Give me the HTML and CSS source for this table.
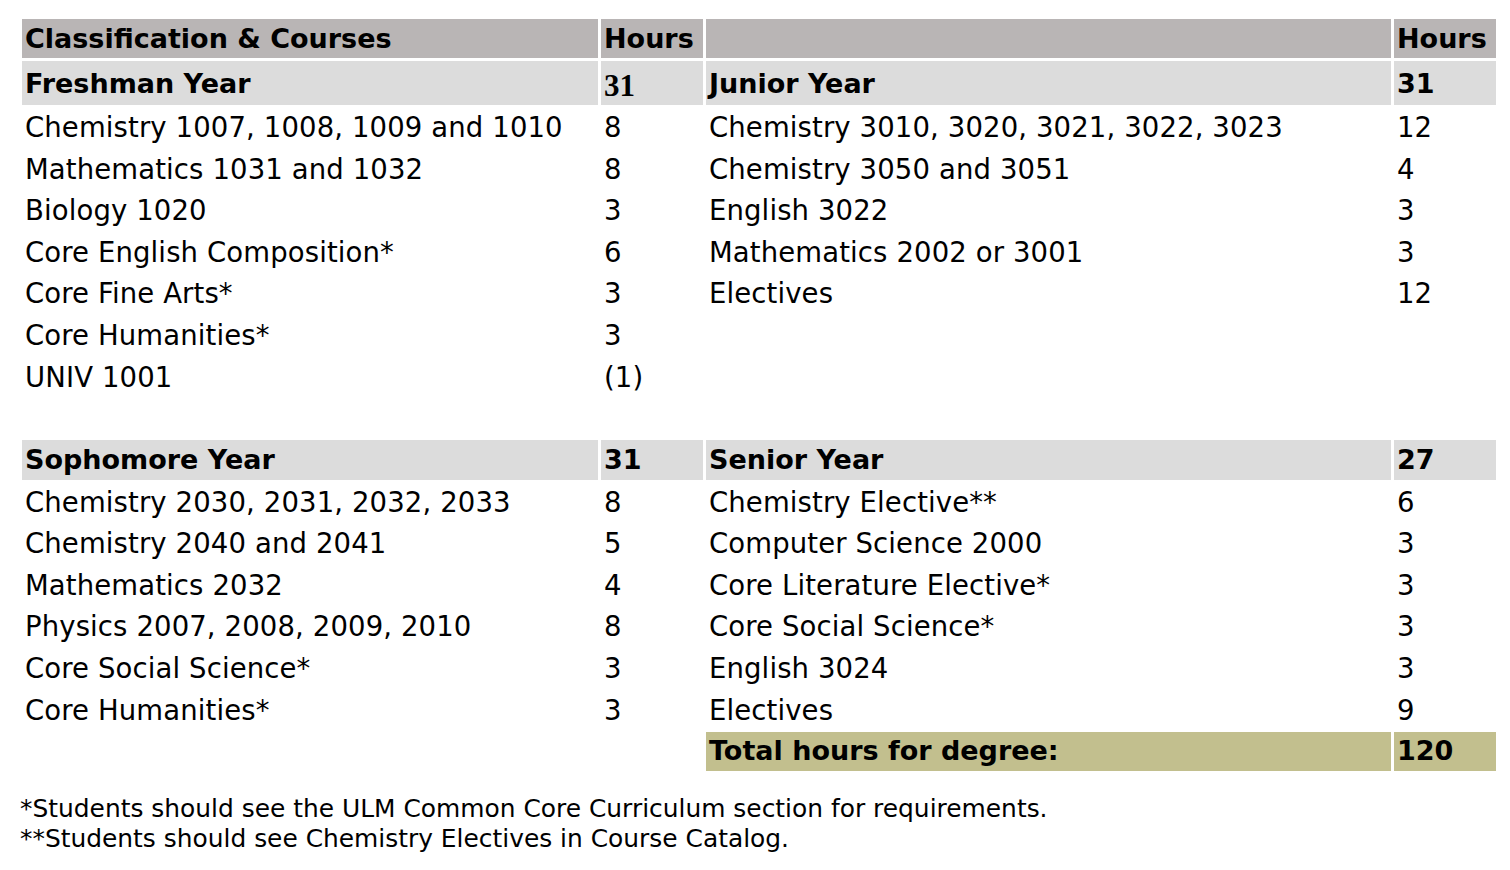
FILE: index.html
```html
<!DOCTYPE html>
<html>
<head>
<meta charset="utf-8">
<link rel="stylesheet" href="styles.css">
</head>
<body>
<table class="plan">
  <colgroup>
    <col class="c-course"><col class="c-hours"><col class="c-course2"><col class="c-hours">
  </colgroup>
  <tr class="head">
    <th>Classification &amp; Courses</th><th>Hours</th><th></th><th>Hours</th>
  </tr>
  <tr class="year first">
    <td>Freshman Year</td><td class="serif">31</td><td>Junior Year</td><td>31</td>
  </tr>
  <tr><td>Chemistry 1007, 1008, 1009 and 1010</td><td>8</td><td>Chemistry 3010, 3020, 3021, 3022, 3023</td><td>12</td></tr>
  <tr><td>Mathematics 1031 and 1032</td><td>8</td><td>Chemistry 3050 and 3051</td><td>4</td></tr>
  <tr><td>Biology 1020</td><td>3</td><td>English 3022</td><td>3</td></tr>
  <tr><td>Core English Composition*</td><td>6</td><td>Mathematics 2002 or 3001</td><td>3</td></tr>
  <tr><td>Core Fine Arts*</td><td>3</td><td>Electives</td><td>12</td></tr>
  <tr><td>Core Humanities*</td><td>3</td><td></td><td></td></tr>
  <tr><td>UNIV 1001</td><td>(1)</td><td></td><td></td></tr>
  <tr class="blank"><td></td><td></td><td></td><td></td></tr>
  <tr class="year second">
    <td>Sophomore Year</td><td>31</td><td>Senior Year</td><td>27</td>
  </tr>
  <tr><td>Chemistry 2030, 2031, 2032, 2033</td><td>8</td><td>Chemistry Elective**</td><td>6</td></tr>
  <tr><td>Chemistry 2040 and 2041</td><td>5</td><td>Computer Science 2000</td><td>3</td></tr>
  <tr><td>Mathematics 2032</td><td>4</td><td>Core Literature Elective*</td><td>3</td></tr>
  <tr><td>Physics 2007, 2008, 2009, 2010</td><td>8</td><td>Core Social Science*</td><td>3</td></tr>
  <tr><td>Core Social Science*</td><td>3</td><td>English 3024</td><td>3</td></tr>
  <tr><td>Core Humanities*</td><td>3</td><td>Electives</td><td>9</td></tr>
  <tr class="total"><td></td><td></td><td class="fill">Total hours for degree:</td><td class="fill">120</td></tr>
</table>
<div class="notes">
  <p>*Students should see the ULM Common Core Curriculum section for requirements.</p>
  <p>**Students should see Chemistry Electives in Course Catalog.</p>
</div>
</body>
</html>
```
FILE: styles.css
```css
html, body {
  margin: 0;
  padding: 0;
  background: #ffffff;
}
body {
  font-family: "DejaVu Sans", Verdana, sans-serif;
  color: #000;
}
.plan {
  margin: 16px 0 0 19px;
  border-collapse: separate;
  border-spacing: 3px;
  table-layout: fixed;
  width: 1480px;
  font-size: 27.5px;
  letter-spacing: 0.12px;
}
.c-course { width: 576px; }
.c-hours { width: 102px; }
.c-course2 { width: 685px; }
.plan th, .plan td {
  padding: 0 3px;
  line-height: 38.6px;
  height: 38.6px;
  text-align: left;
  vertical-align: middle;
  white-space: nowrap;
  font-weight: normal;
}
.plan .head th {
  background: #b9b5b5;
  font-weight: bold;
  font-size: 27px;
  letter-spacing: 0;
  height: 39px;
  line-height: 39px;
}
.plan .year td {
  background: #dcdcdc;
  font-weight: bold;
  font-size: 27px;
  letter-spacing: 0;
}
.plan .year.first td {
  height: 44px;
  line-height: 43px;
}
.plan .year.second td {
  height: 40px;
  line-height: 40px;
}
.plan .year.first td.serif {
  font-family: "Liberation Serif", "Times New Roman", serif;
  font-weight: bold;
  font-size: 31px;
  line-height: 38px;
  padding-top: 5px;
  height: 39px;
}
.plan .blank td {
  height: 37.4px;
  line-height: 37.4px;
}
.plan .total td.fill {
  background: #c2bf8e;
  font-weight: bold;
  font-size: 27px;
  letter-spacing: 0;
}
.notes {
  margin: 20px 0 0 20px;
  font-size: 24.9px;
  line-height: 30px;
}
.notes p {
  margin: 0;
}
```
